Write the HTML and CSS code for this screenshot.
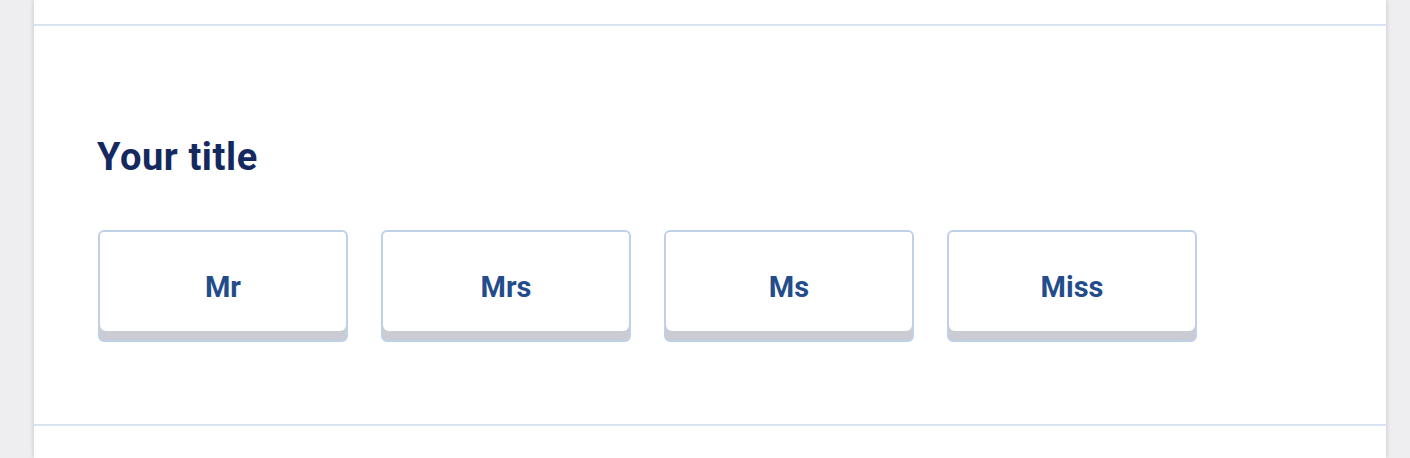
FILE: index.html
```html
<!DOCTYPE html>
<html lang="en">

<head>
    <meta charset="UTF-8">
    <meta name="viewport" content="width=device-width, initial-scale=1.0">
    <title>Your title</title>
    <link rel="stylesheet" href="styles.css">
</head>

<body>
    <div class="card">
        <div class="card-top"></div>
        <div class="section">
            <h2 class="question">Your title</h2>
            <div class="options">
                <button class="option"><span class="option-face">Mr</span></button>
                <button class="option"><span class="option-face">Mrs</span></button>
                <button class="option"><span class="option-face">Ms</span></button>
                <button class="option"><span class="option-face">Miss</span></button>
            </div>
        </div>
        <div class="card-bottom"></div>
    </div>
</body>

</html>
```

FILE: styles.css
```css
body {
    margin: 0;
    padding: 0;
    background-color: #eeeef0;
    font-family: Roboto, "Liberation Sans", Arial, sans-serif;
    height: 458px;
    overflow: hidden;
}

.card {
    margin-left: 34px;
    width: 1352px;
    height: 458px;
    background-color: #fff;
    box-shadow: 0 0 5px rgba(0, 0, 0, 0.18);
}

.card-top {
    height: 24px;
}

.section {
    border-top: 2px solid #d8e4f1;
    border-bottom: 2px solid #d8e4f1;
    height: 402px;
    box-sizing: border-box;
    padding: 108px 64px 0;
}

.question {
    margin: 0 0 50px -1px;
    font-size: 38px;
    line-height: 46px;
    font-weight: 700;
    color: #13295f;
    letter-spacing: 0.6px;
}

.options {
    display: flex;
    gap: 33px;
}

.option {
    width: 250px;
    height: 112px;
    padding: 0 0 9px;
    border: 2px solid #bfd1e8;
    border-radius: 6px;
    background-color: #cbccd3;
    box-sizing: border-box;
    font-family: inherit;
    cursor: pointer;
    display: flex;
}

.option-face {
    flex: 1;
    display: flex;
    align-items: center;
    justify-content: center;
    padding-top: 10px;
    background-color: #fff;
    border-radius: 4px 4px 6px 6px;
    font-size: 29px;
    font-weight: 700;
    color: #234c8b;
}
```
